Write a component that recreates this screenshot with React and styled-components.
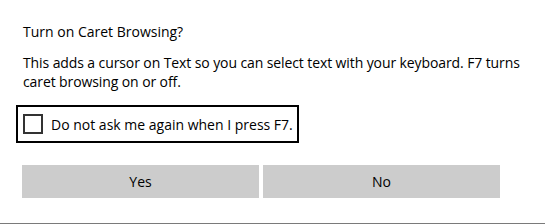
import React from "react";
import styled, { createGlobalStyle } from "styled-components";

const Global = createGlobalStyle`
  html, body { margin: 0; padding: 0; background: #fff; }
  body { font-family: "Open Sans", "Noto Sans", sans-serif; color: #000; }
`;

const Dialog = styled.div`
  box-sizing: border-box;
  width: 545px;
  height: 224px;
  border-bottom: 1px solid #7a7a7a;
  padding: 22px 0 0 23px;
  display: flex;
  flex-direction: column;
`;

const Title = styled.div`
  font-size: 14px;
  line-height: 20px;
`;

const Body = styled.p`
  margin: 11px 0 0;
  font-size: 14px;
  line-height: 19px;
  letter-spacing: -0.1px;
  width: 518px;
`;

const CheckRow = styled.label`
  box-sizing: border-box;
  margin: 14px 0 0 -7px;
  width: 283px;
  height: 38px;
  border: 2px solid #000;
  display: flex;
  align-items: center;
  gap: 8px;
  padding-left: 5px;
  font-size: 14px;
`;

const Box = styled.span`
  box-sizing: border-box;
  width: 20px;
  height: 20px;
  border: 2px solid #333;
`;

const Buttons = styled.div`
  margin: 22px 0 0 -1px;
  display: flex;
  gap: 4px;
`;

const Button = styled.button`
  width: 237px;
  height: 33px;
  border: none;
  background: #cccccc;
  font-family: inherit;
  font-size: 14px;
  color: #000;
  padding: 0;
`;

export default function App() {
  return (
    <>
      <Global />
      <Dialog>
        <Title>Turn on Caret Browsing?</Title>
        <Body>
          This adds a cursor on Text so you can select text with your keyboard. F7 turns caret browsing on or off.
        </Body>
        <CheckRow>
          <Box />
          Do not ask me again when I press F7.
        </CheckRow>
        <Buttons>
          <Button>Yes</Button>
          <Button>No</Button>
        </Buttons>
      </Dialog>
    </>
  );
}
